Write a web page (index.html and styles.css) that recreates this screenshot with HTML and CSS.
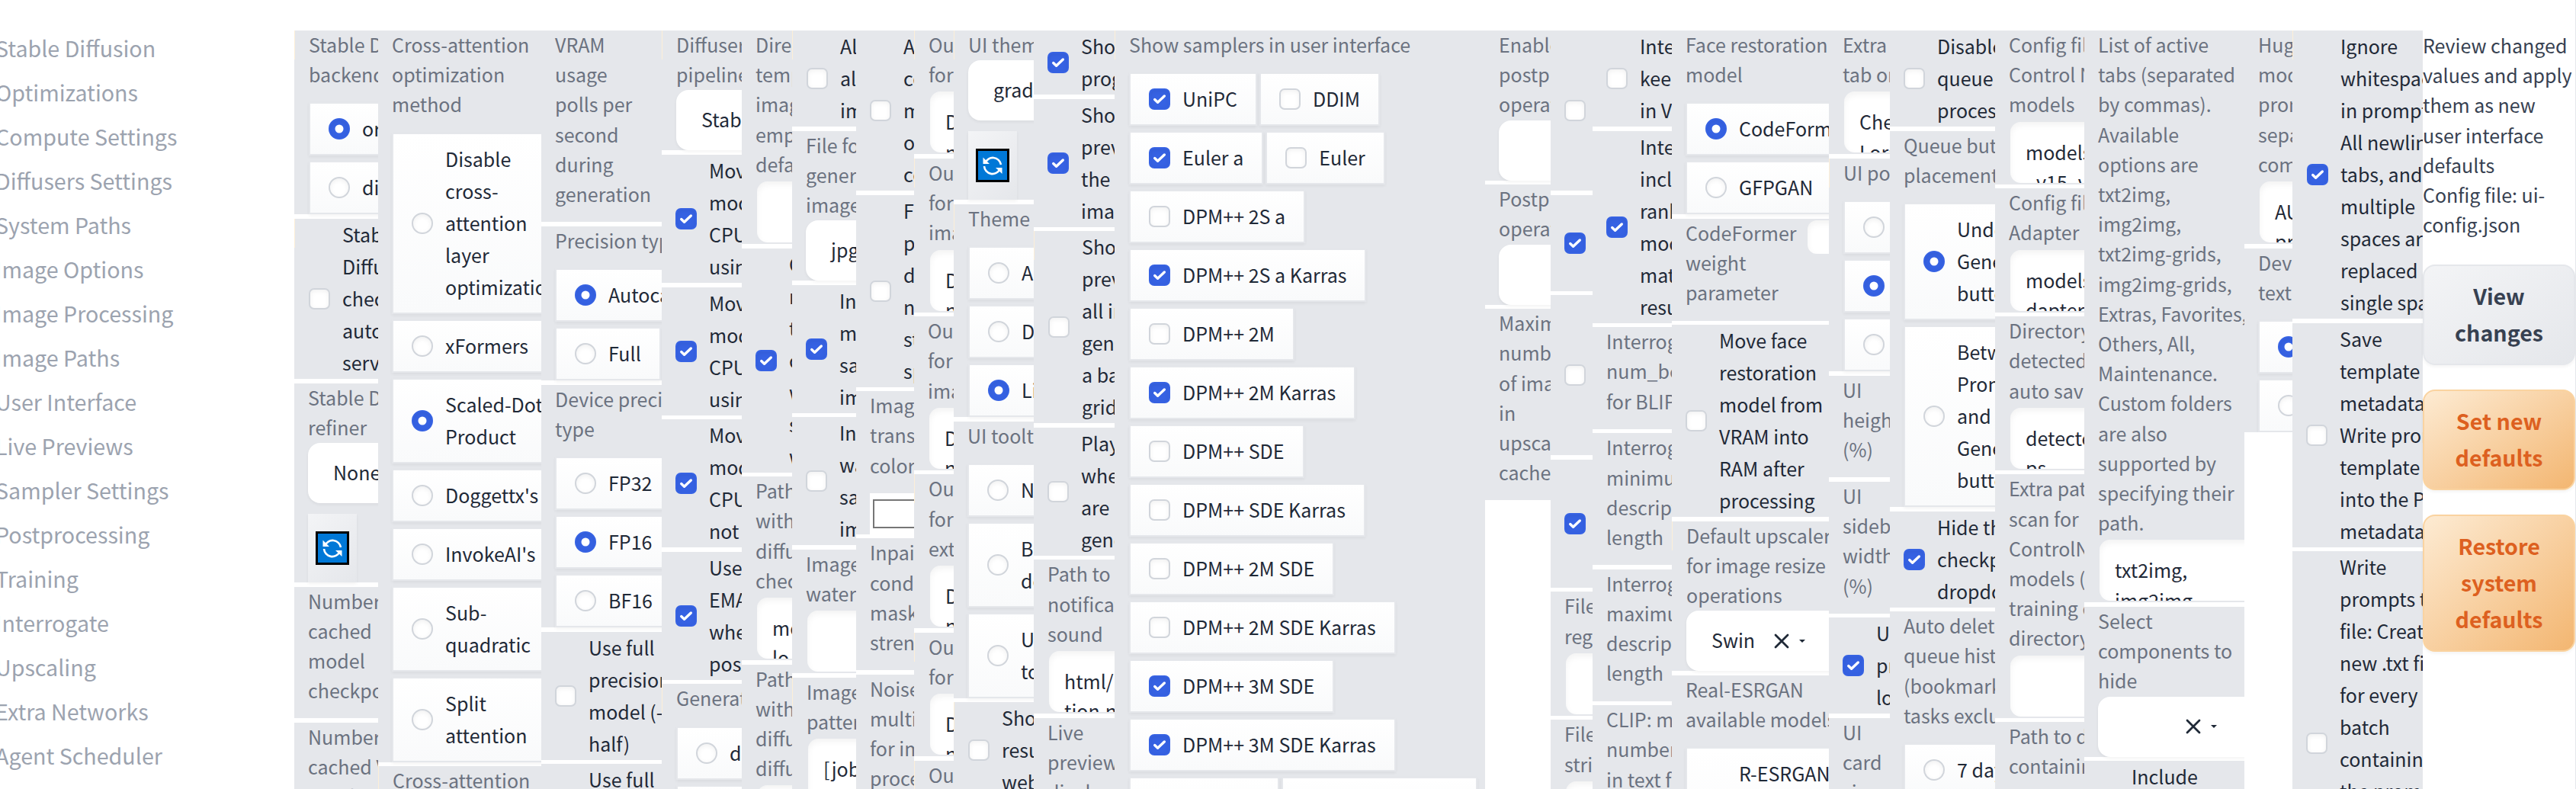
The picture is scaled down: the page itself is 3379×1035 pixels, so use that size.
FILE: index.html
```html
<!DOCTYPE html>
<html lang="en">
<head>
<meta charset="utf-8">
<title>Settings</title>
<link rel="stylesheet" href="styles.css">
</head>
<body>
<svg width="0" height="0" class="defs" aria-hidden="true">
  <symbol id="clear" viewBox="0 0 20 20"><path d="M2 2L18 18M18 2L2 18" stroke="#1f2937" stroke-width="2.8" stroke-linecap="round"/></symbol>
  <symbol id="caret" viewBox="0 0 8 4"><path d="M0 0H8L4 4Z" fill="#1f2937"/></symbol>
  <symbol id="refresh" viewBox="0 0 44 44"><path fill="#000" d="M0 0H44V44H0Z"/><path fill="#0078d7" d="M3 3H41V41H3Z"/><path d="M12.2 19A10.8 10.8 0 0 1 33 21M31.5 27A10.8 10.8 0 0 1 11 23" fill="none" stroke="#fff" stroke-width="2.6"/><path fill="#fff" d="M9.5 11.5V20H18ZM34.500 33V25H26Z"/></symbol>
</svg>
<div class="page">
<nav class="tabs">
  <a>Stable Diffusion</a><a>Optimizations</a><a>Compute Settings</a><a>Diffusers Settings</a><a>System Paths</a><a>Image Options</a><a>Image Processing</a><a>Image Paths</a><a>User Interface</a><a>Live Previews</a><a>Sampler Settings</a><a>Postprocessing</a><a>Training</a><a>Interrogate</a><a>Upscaling</a><a>Extra Networks</a><a>Agent Scheduler</a>
</nav>
<main class="columns">

<section class="col">
  <div class="card changed"><h4>Stable Diffusion
backend</h4><div class="options"><label class="option"><input type="radio" checked><span>original</span></label><label class="option"><input type="radio"><span>diffusers</span></label></div></div>
  <label class="card check changed"><input type="checkbox"><span>Stable
Diffusion
checkpoint
autoload on
server start</span></label>
  <div class="card"><h4 class="tight">Stable Diffusion
refiner</h4><div class="select"><span>None</span></div><button class="refresh"><svg><use href="#refresh"/></svg></button></div>
  <div class="card"><h4>Number of
cached
model
checkpoints</h4></div>
  <div class="card"><h4>Number of
cached VAE
checkpoints</h4></div>
</section>

<section class="col">
  <div class="card"><h4>Cross-attention
optimization
method</h4><div class="options"><label class="option"><input type="radio"><span>Disable
cross-
attention
layer
optimization</span></label><label class="option wide"><input type="radio"><span>xFormers</span></label><label class="option"><input type="radio" checked><span>Scaled-Dot
Product</span></label><label class="option"><input type="radio"><span>Doggettx's</span></label><label class="option"><input type="radio"><span>InvokeAI's</span></label><label class="option wide"><input type="radio"><span>Sub-
quadratic</span></label><label class="option wide"><input type="radio"><span>Split
attention</span></label></div></div>
  <div class="card changed"><h4>Cross-attention
options</h4></div>
</section>

<section class="col">
  <div class="card"><h4>VRAM
usage
polls per
second
during
generation</h4></div>
  <div class="card"><h4>Precision type</h4><div class="options"><label class="option"><input type="radio" checked><span>Autocast</span></label><label class="option"><input type="radio"><span>Full</span></label></div></div>
  <div class="card"><h4>Device precision
type</h4><div class="options"><label class="option wide"><input type="radio"><span>FP32</span></label><label class="option wide"><input type="radio" checked><span>FP16</span></label><label class="option wide"><input type="radio"><span>BF16</span></label></div></div>
  <label class="card check"><input type="checkbox"><span>Use full
precision for
model (--no-
half)</span></label>
  <label class="card check"><input type="checkbox" class="below"><span>Use full
precision for
VAE (--no-
half-vae)</span></label>
</section>

<section class="col">
  <div class="card changed"><h4 class="tight">Diffusers
pipeline</h4><div class="select"><span>Stable</span></div></div>
  <label class="card check"><input type="checkbox" checked><span>Move
model to
CPU when
using</span></label>
  <label class="card check"><input type="checkbox" checked><span>Move
model to
CPU when
using</span></label>
  <label class="card check"><input type="checkbox" checked><span>Move
model to
CPU when
not</span></label>
  <label class="card check"><input type="checkbox" checked><span>Use
EMA
when
possible</span></label>
  <div class="card changed"><h4>Generator</h4><div class="options"><label class="option"><input type="radio"><span>default</span></label><label class="option"><input type="radio"><span>cpu</span></label></div></div>
</section>

<section class="col">
  <div class="card"><h4 class="tight">Directory
temp
images;
empty
default</h4><div class="textbox"></div></div>
  <label class="card check"><input type="checkbox" checked><span>C
r
t
c
w
s
w</span></label>
  <div class="card"><h4 class="tight">Path
with
diffusers
checkpoints</h4><div class="textbox">models
lo</div></div>
  <div class="card"><h4 class="tight">Path
with
diffusers
diffusion</h4><div class="textbox"></div></div>
</section>

<section class="col">
  <label class="card check changed"><input type="checkbox"><span>Always
all
images</span></label>
  <div class="card"><h4 class="tight">File format
generated
images</h4><div class="select"><span>jpg</span></div></div>
  <label class="card check"><input type="checkbox" checked><span>Include
metadata
saved
images</span></label>
  <label class="card check"><input type="checkbox"><span>Include
watermark
saved
images</span></label>
  <div class="card"><h4 class="tight">Image
watermark</h4><div class="textbox"></div></div>
  <div class="card changed"><h4 class="tight">Images
pattern</h4><div class="textbox">[job_</div></div>
</section>

<section class="col">
  <label class="card check"><input type="checkbox"><span>Apply
color
match
on
colors</span></label>
  <label class="card check"><input type="checkbox"><span>For
path
do
not
steps
specify</span></label>
  <div class="card"><h4>Image
transparent
color</h4><div class="swatch"></div></div>
  <div class="card"><h4>Inpainting
conditioning
mask
strength</h4></div>
  <div class="card"><h4>Noise
multiplier
for img
processing</h4></div>
</section>

<section class="col">
  <div class="card changed"><h4 class="tight">Output
for</h4><div class="textbox">D:
n</div></div>
  <div class="card changed"><h4 class="tight">Output
for
images</h4><div class="textbox">D:
n</div></div>
  <div class="card"><h4 class="tight">Output
for
images</h4><div class="textbox">D:
n</div></div>
  <div class="card changed"><h4 class="tight">Output
for
extras</h4><div class="textbox">D:
n</div></div>
  <div class="card changed"><h4 class="tight">Output
for</h4><div class="textbox">D:
n</div></div>
  <div class="card changed"><h4 class="tight">Output
for</h4></div>
</section>

<section class="col">
  <div class="card changed"><h4 class="tight">UI theme</h4><div class="select"><span>gradio</span></div><button class="refresh"><svg><use href="#refresh"/></svg></button></div>
  <div class="card changed"><h4>Theme</h4><div class="options"><label class="option"><input type="radio"><span>Auto</span></label><label class="option"><input type="radio"><span>Dark</span></label><label class="option"><input type="radio" checked><span>Light</span></label></div></div>
  <div class="card"><h4>UI tooltips</h4><div class="options"><label class="option"><input type="radio"><span>None</span></label><label class="option"><input type="radio"><span>Browser
default</span></label><label class="option"><input type="radio"><span>UI
tooltips</span></label></div></div>
  <label class="card check changed"><input type="checkbox"><span>Show
results in
web UI</span></label>
</section>

<section class="col">
  <label class="card check"><input type="checkbox" checked><span>Show
progress</span></label>
  <label class="card check"><input type="checkbox" checked><span>Show
previews of
the
images</span></label>
  <label class="card check changed"><input type="checkbox"><span>Show
previews
all images
generated
a batch
grid</span></label>
  <label class="card check"><input type="checkbox"><span>Play
when
are
generated</span></label>
  <div class="card"><h4 class="tight">Path to
notification
sound</h4><div class="textbox">html/
tion.n</div></div>
  <div class="card"><h4>Live
preview
display</h4></div>
</section>

<section class="col">
  <div class="card changed"><h4>Show samplers in user interface</h4><div class="options"><label class="option"><input type="checkbox" checked><span>UniPC</span></label><label class="option"><input type="checkbox"><span>DDIM</span></label><label class="option"><input type="checkbox" checked><span>Euler a</span></label><label class="option"><input type="checkbox"><span>Euler</span></label><label class="option"><input type="checkbox"><span>DPM++ 2S a</span></label><label class="option"><input type="checkbox" checked><span>DPM++ 2S a Karras</span></label><label class="option"><input type="checkbox"><span>DPM++ 2M</span></label><label class="option"><input type="checkbox" checked><span>DPM++ 2M Karras</span></label><label class="option"><input type="checkbox"><span>DPM++ SDE</span></label><label class="option"><input type="checkbox"><span>DPM++ SDE Karras</span></label><label class="option"><input type="checkbox"><span>DPM++ 2M SDE</span></label><label class="option"><input type="checkbox"><span>DPM++ 2M SDE Karras</span></label><label class="option"><input type="checkbox" checked><span>DPM++ 3M SDE</span></label><label class="option"><input type="checkbox" checked><span>DPM++ 3M SDE Karras</span></label><label class="option"><input type="checkbox"><span>DPM fast</span></label><label class="option"><input type="checkbox"><span>DPM adaptive</span></label></div></div>
</section>

<section class="col">
  <div class="card"><h4 class="tight">Enable
postprocess
operations</h4><div class="select"></div></div>
  <div class="card"><h4 class="tight">Postprocess
operations</h4><div class="select"></div></div>
  <div class="card"><h4>Maximum
number
of images
in
upscaling
cache</h4></div>
</section>

<section class="col">
  <label class="card check rows-5"><input type="checkbox"></label>
  <label class="card check rows-3"><input type="checkbox" checked></label>
  <label class="card check rows-5"><input type="checkbox"></label>
  <label class="card check rows-4"><input type="checkbox" checked></label>
  <div class="card"><h4 class="tight">Filename
regex</h4><div class="textbox"></div></div>
  <div class="card"><h4 class="tight">Filename
string</h4><div class="textbox"></div></div>
</section>

<section class="col">
  <label class="card check"><input type="checkbox"><span>Interrogate:
keep models
in VRAM</span></label>
  <label class="card check"><input type="checkbox" checked><span>Interrogate:
include
ranks of
model tags
matches in
results</span></label>
  <div class="card"><h4>Interrogate:
num_beams
for BLIP</h4></div>
  <div class="card"><h4>Interrogate:
minimum
description
length</h4></div>
  <div class="card"><h4>Interrogate:
maximum
description
length</h4></div>
  <div class="card"><h4>CLIP: maximum
number of lines
in text file</h4></div>
</section>

<section class="col">
  <div class="card"><h4>Face restoration
model</h4><div class="options"><label class="option wide"><input type="radio" checked><span>CodeFormer</span></label><label class="option wide"><input type="radio"><span>GFPGAN</span></label></div></div>
  <div class="card weight"><h4>CodeFormer
weight
parameter</h4><div class="number"></div></div>
  <label class="card check"><input type="checkbox"><span>Move face
restoration
model from
VRAM into
RAM after
processing</span></label>
  <div class="card changed"><h4 class="tight">Default upscaler
for image resize
operations</h4><div class="select"><span class="value">Swin</span><svg class="x"><use href="#clear"/></svg><svg class="down"><use href="#caret"/></svg></div></div>
  <div class="card"><h4>Real-ESRGAN
available models</h4><div class="options"><label class="option"><input type="checkbox" class="below"><span>R-ESRGAN
General
4xV3</span></label></div></div>
</section>

<section class="col">
  <div class="card"><h4 class="tight">Extra
tab order</h4><div class="textbox">Checkpoints
Lora</div></div>
  <div class="card changed"><h4>UI position</h4><div class="options"><label class="option wide"><input type="radio"></label><label class="option wide"><input type="radio" checked></label><label class="option wide"><input type="radio"></label></div></div>
  <div class="card"><h4>UI
height
(%)</h4></div>
  <div class="card"><h4>UI
sidebar
width
(%)</h4></div>
  <label class="card check"><input type="checkbox" checked><span>UI
preload
lora</span></label>
  <div class="card"><h4>UI
card
size</h4></div>
</section>

<section class="col">
  <label class="card check"><input type="checkbox"><span>Disable
queue
processing</span></label>
  <div class="card"><h4>Queue button
placement</h4><div class="options"><label class="option"><input type="radio" checked><span>Under
Generate
button</span></label><label class="option"><input type="radio"><span>Between
Prompt
and
Generate
button</span></label></div></div>
  <label class="card check"><input type="checkbox" checked><span>Hide the
checkpoint
dropdown</span></label>
  <div class="card"><h4>Auto delete
queue history
(bookmarked
tasks excluded)</h4><div class="options"><label class="option"><input type="radio"><span>7 days</span></label></div></div>
</section>

<section class="col">
  <div class="card"><h4 class="tight">Config file
Control Net
models</h4><div class="textbox">models\
_v15_v2</div></div>
  <div class="card"><h4 class="tight">Config file
Adapter</h4><div class="textbox">models\
dapter</div></div>
  <div class="card"><h4 class="tight">Directory for
detected
auto saving</h4><div class="textbox">detected
ps</div></div>
  <div class="card"><h4 class="tight">Extra path to
scan for
ControlNet
models (e.g.
training output
directory)</h4><div class="textbox"></div></div>
  <div class="card"><h4>Path to dir
containing</h4></div>
</section>

<section class="col">
  <div class="card"><h4 class="tight">List of active
tabs (separated
by commas).
Available
options are
txt2img,
img2img,
txt2img-grids,
img2img-grids,
Extras, Favorites,
Others, All,
Maintenance.
Custom folders
are also
supported by
specifying their
path.</h4><div class="textbox">txt2img,
img2img</div></div>
  <div class="card"><h4 class="tight">Select
components to
hide</h4><div class="select"><span class="value"></span><svg class="x"><use href="#clear"/></svg><svg class="down"><use href="#caret"/></svg></div></div>
  <label class="card check"><input type="checkbox" class="below"><span>Include
extension
tabs</span></label>
</section>

<section class="col">
  <div class="card"><h4 class="tight">Huggingface
model
prompt
separator
comma</h4><div class="textbox">AUTO
pr</div></div>
  <div class="card"><h4>Device
text</h4><div class="options"><label class="option wide"><input type="radio" checked></label><label class="option wide"><input type="radio"></label></div></div>
</section>

<section class="col">
  <label class="card check changed"><input type="checkbox" checked><span>Ignore
whitespace
in prompts:
All newlines,
tabs, and
multiple
spaces are
replaced by
single space</span></label>
  <label class="card check"><input type="checkbox"><span>Save
template
metadata:
Write prompt
template
into the PNG
metadata</span></label>
  <label class="card check"><input type="checkbox"><span>Write
prompts to
file: Create
new .txt file
for every
batch
containing
the prompt
and
negative
prompt
used</span></label>
</section>
</main>
<aside class="actions">
  <p>Review changed
values and apply
them as new
user interface
defaults
Config file: ui-
config.json</p>
  <button class="btn">View
changes</button>
  <button class="btn primary">Set new
defaults</button>
  <button class="btn primary">Restore
system
defaults</button>
</aside>
</div>
</body>
</html>
```
FILE: styles.css
```css
* { box-sizing: border-box; }

body {
  margin: 0;
  height: 1035px;
  overflow: hidden;
  background: #fff;
  color: #1f2937;
  font: 25px/39.2px "Noto Sans CJK SC", "Source Sans Pro", sans-serif;
}

.defs { display: block; height: 0; }

.page {
  display: grid;
  grid-template-columns: 386px 2792px 200px;
  height: 1035px;
  padding-top: 39px;
  border-right: 1px solid #e5e7eb;
  overflow: hidden;
}

.tabs {
  display: flex;
  flex-direction: column;
  margin: -5px 0 0 -6px;
  color: #9ca3af;
  font-size: 28.65px;
  line-height: 58px;
  white-space: nowrap;
}

.columns {
  display: grid;
  grid-template-columns: 110px 214px 158px 105px 66px 84px 76px 52px 105px 106px 486px 86px 55px 104px 206px 80px 138px 117px 210px 63px 171px;
  align-items: start;
  margin-top: 1px;
}

.col {
  display: flex;
  flex-direction: column;
  gap: 5.6px;
  overflow: hidden;
  white-space: pre;
}

.card {
  display: flow-root;
  flex: none;
  padding-left: 18px;
  background: #e5e7eb;
}
.card.changed {
  padding-left: 19px;
  background: linear-gradient(#fdefd8, #fdefd8) no-repeat 0 0 / 1px 38px #e5e7eb;
}

h4 {
  margin: -1px 0 17px;
  color: #6b7280;
  font-size: inherit;
  font-weight: 400;
}
h4.tight { margin-bottom: 1px; }

.card.check {
  display: flex;
  align-items: center;
  gap: 16px;
  line-height: 42px;
}
.check span, .option span, .select span { margin: -1px 0 1px; }
.rows-3 { height: 126px; }
.rows-4 { height: 168px; }
.rows-5 { height: 210px; }

input {
  flex: none;
  appearance: none;
  width: 28px;
  height: 28px;
  margin: 0;
  border: 2px solid #d1d5db;
  border-radius: 7px;
  background: #fff;
  box-shadow: inset 0 2px 6px rgba(0, 0, 0, .06);
}
input[type="radio"] { border-radius: 50%; }
input:checked {
  border-color: #3662e3;
  background: #3662e3 center / 24px 24px no-repeat;
}
input[type="checkbox"]:checked {
  background-image: url("data:image/svg+xml,%3Csvg xmlns='http://www.w3.org/2000/svg' viewBox='0 0 24 24'%3E%3Cpath d='M5.700 12.600L9.600 16.200L18.300 8' fill='none' stroke='white' stroke-width='3.400' stroke-linecap='round' stroke-linejoin='round'/%3E%3C/svg%3E");
}
input[type="radio"]:checked {
  background-image: url("data:image/svg+xml,%3Csvg xmlns='http://www.w3.org/2000/svg' viewBox='0 0 24 24'%3E%3Ccircle cx='12' cy='12' r='5.500' fill='white'/%3E%3C/svg%3E");
}
input.below { visibility: hidden; }

.options {
  display: flex;
  flex-wrap: wrap;
  gap: 7px 3px;
}
.option {
  display: flex;
  align-items: center;
  gap: 16px;
  min-height: 70px;
  padding: 12px 24px;
  border: 2px solid #e5e7eb;
  background: linear-gradient(#fff, #f9fafb) padding-box;
  box-shadow: 0 2px 4px rgba(0, 0, 0, .05);
  line-height: 42px;
}
.option.wide { min-width: 210px; }

.select {
  display: flex;
  align-items: center;
  width: 260px;
  height: 79px;
  padding-left: 33px;
  border-radius: 16px;
  background: #fff;
  box-shadow: 0 2px 4px rgba(0, 0, 0, .05);
}
.value { width: 82px; }
.x { width: 20px; height: 20px; }
.down { width: 8px; height: 4px; margin-left: 13px; }

.textbox {
  width: 240px;
  height: 84px;
  padding: 20px;
  border: 2px solid #e5e7eb;
  border-radius: 16px;
  background: #fff;
  box-shadow: inset 0 4px 8px rgba(0, 0, 0, .05);
  overflow: hidden;
}

.refresh {
  display: flex;
  align-items: center;
  justify-content: center;
  width: 64px;
  height: 90px;
  margin-top: 14px;
  padding: 0;
  border: 0;
  background: linear-gradient(135deg, #f3f4f6, #e5e7eb);
  box-shadow: 0 2px 4px rgba(0, 0, 0, .05);
}
.refresh svg { width: 44px; height: 44px; }

.swatch {
  width: 120px;
  height: 54px;
  background: linear-gradient(#fff, #fff) 6px 10px / 200px 34px no-repeat, linear-gradient(#767676, #767676) 4px 8px / 200px 38px no-repeat #fff;
}

.card.weight { display: flex; }
.number {
  flex: none;
  width: 100px;
  height: 44px;
  margin: 2px 0 0 15px;
  border-radius: 12px;
  background: #fff;
  box-shadow: inset 0 4px 8px rgba(0, 0, 0, .05);
}

.actions {
  display: flex;
  flex-direction: column;
  gap: 32px;
  padding-top: 2px;
  white-space: pre;
}
.actions p {
  margin: -1px 0 1px;
  color: #374151;
}
.btn {
  padding: 15px 0 17px;
  border: 2px solid #e5e7eb;
  border-radius: 16px;
  background: linear-gradient(to bottom right, #f3f4f6, #e5e7eb);
  box-shadow: 0 2px 4px rgba(0, 0, 0, .05);
  color: #374151;
  font: 700 28.65px/48px "Noto Sans CJK SC", "Source Sans Pro", sans-serif;
  white-space: pre;
}
.btn.primary {
  border-color: #fad3a0;
  background: linear-gradient(to bottom right, #fdebd3, #f3b671);
  color: #dd6020;
}
```
